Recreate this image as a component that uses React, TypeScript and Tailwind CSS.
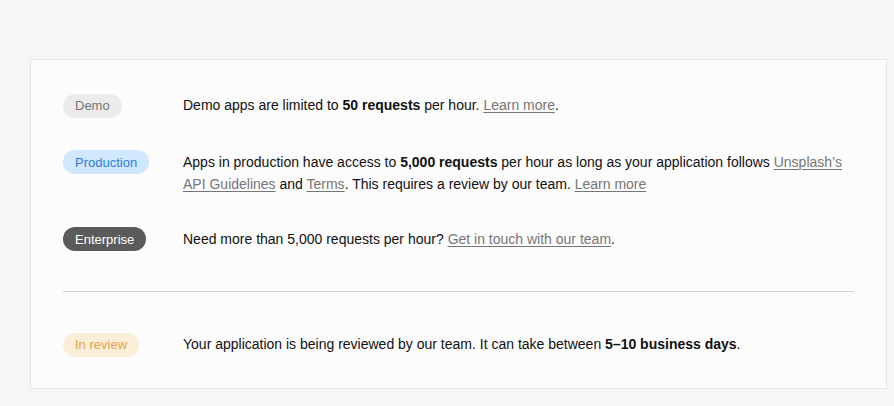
import React from "react";

const font = { fontFamily: '"Liberation Sans", Arial, sans-serif' };

function Badge({ children, cls }: { children: React.ReactNode; cls: string }) {
  return (
    <span className={`inline-flex h-6 items-center rounded-full px-3 text-[13px] leading-none ${cls}`}>
      {children}
    </span>
  );
}

function L({ children }: { children: React.ReactNode }) {
  return <a className="text-[#767676] underline decoration-1 underline-offset-[2px]">{children}</a>;
}

function Row({ badge, children }: { badge: React.ReactNode; children: React.ReactNode }) {
  return (
    <div className="flex items-start">
      <div className="w-[120px] shrink-0">{badge}</div>
      <p className="pt-px text-[14px] leading-[22px] text-[#111]">{children}</p>
    </div>
  );
}

export default function App() {
  return (
    <div className="min-h-[406px] bg-[#f6f6f6] pt-[59px] pl-[30px] pr-[7px] pb-[18px]" style={font}>
      <div className="border border-[#e6e6e6] bg-[#fcfcfc] px-8 pt-[33px] pb-[31px]">
        <div className="flex flex-col gap-8">
          <Row badge={<Badge cls="bg-[#ebebeb] text-[#767676]">Demo</Badge>}>
            Demo apps are limited to <b>50 requests</b> per hour. <L>Learn more</L>.
          </Row>
          <Row badge={<Badge cls="bg-[#d1e7fd] text-[#2a7de1]">Production</Badge>}>
            Apps in production have access to <b>5,000 requests</b> per hour as long as your application follows{" "}
            <L>Unsplash’s API Guidelines</L> and <L>Terms</L>. This requires a review by our team. <L>Learn more</L>
          </Row>
          <Row badge={<Badge cls="bg-[#5b5b5b] text-white">Enterprise</Badge>}>
            Need more than 5,000 requests per hour? <L>Get in touch with our team</L>.
          </Row>
        </div>
        <div className="mt-10 mb-10 h-px bg-[#d1d1d1]" />
        <Row badge={<Badge cls="bg-[#fbeed8] text-[#e2a24f]">In review</Badge>}>
          Your application is being reviewed by our team. It can take between <b>5–10 business days</b>.
        </Row>
      </div>
    </div>
  );
}
